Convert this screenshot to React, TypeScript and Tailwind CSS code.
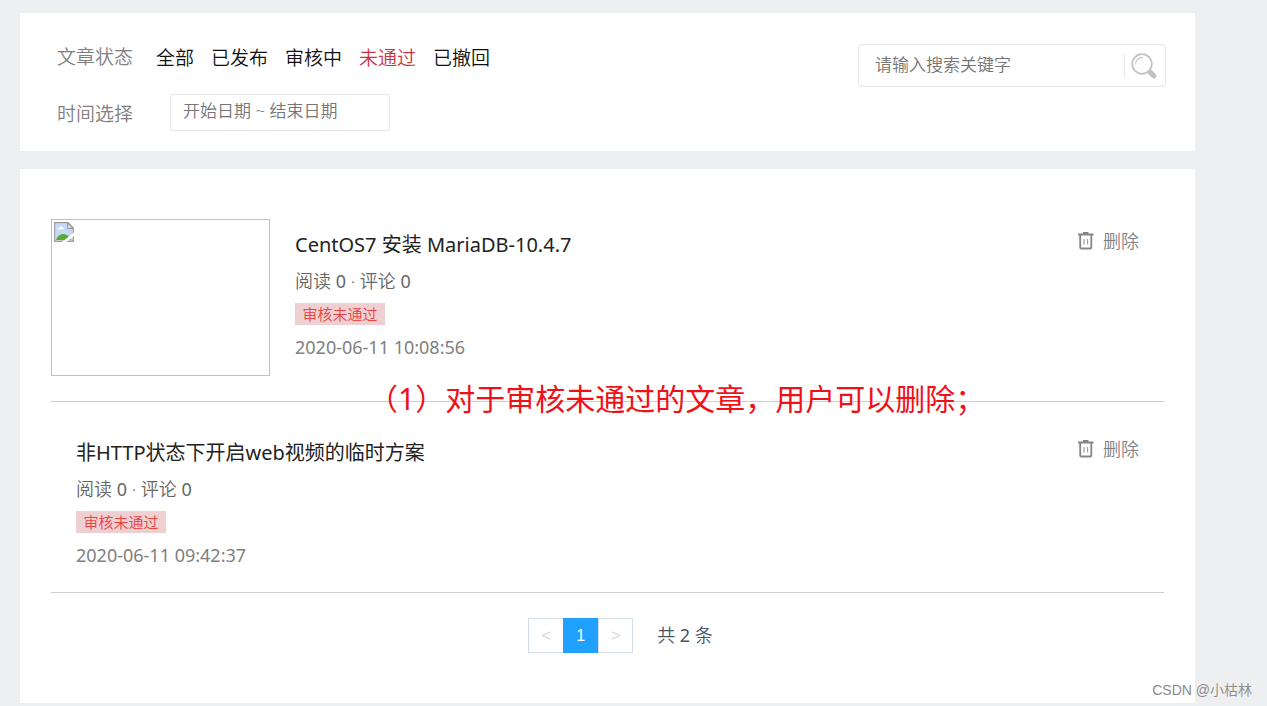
import React, { useCallback, useState } from 'react';

interface Article {
  id: number;
  title: string;
  reads: number;
  comments: number;
  createdAt: string;
  hasCover: boolean;
  note?: string;
}

const STATUSES = ['全部', '已发布', '审核中', '未通过', '已撤回'];

const ARTICLES: Article[] = [
  {
    id: 1,
    title: 'CentOS7 安装 MariaDB-10.4.7',
    reads: 0,
    comments: 0,
    createdAt: '2020-06-11 10:08:56',
    hasCover: true,
    note: '（1）对于审核未通过的文章，用户可以删除；',
  },
  {
    id: 2,
    title: '非HTTP状态下开启web视频的临时方案',
    reads: 0,
    comments: 0,
    createdAt: '2020-06-11 09:42:37',
    hasCover: false,
  },
];

const SearchIcon = () => (
  <svg width="26" height="26" viewBox="0 0 26 26" fill="none" aria-hidden="true">
    <circle cx="11" cy="11" r="9.8" stroke="#c2c2c2" strokeWidth="1.7" />
    <path d="M4.6 11.5A6.8 6.8 0 0 1 12 4.4" stroke="#c8c8c8" strokeWidth="1.1" />
    <path d="M17.5 17.5l1.6 1.6" stroke="#c2c2c2" strokeWidth="2" />
    <path d="M19.3 19.4l3.6 3.5" stroke="#c2c2c2" strokeWidth="5" strokeLinecap="round" />
  </svg>
);

const TrashIcon = () => (
  <svg width="16" height="18" viewBox="0 0 16 18" fill="none" aria-hidden="true">
    <path d="M0 2.5h15.5M5 1h5.5" stroke="#858585" strokeWidth="1.8" />
    <path
      d="M2.2 3v12.2c0 .8.5 1.3 1.3 1.3H12c.8 0 1.3-.5 1.3-1.3V3"
      stroke="#858585"
      strokeWidth="1.8"
    />
    <path d="M6 7v5.5M9.5 7v5.5" stroke="#a6a6a6" strokeWidth="1.3" />
  </svg>
);

const MissingImageIcon = () => (
  <svg width="20" height="20" viewBox="0 0 20 20" aria-hidden="true">
    <path d="M.8.8H14l5.2 5.2v13.2H.8z" fill="#fff" stroke="#9a9a9a" strokeWidth="1.4" />
    <path d="M2 2H13V7h5v11H2z" fill="#c6d8f6" />
    <path d="M13.6 1v5.4H19z" fill="#f4f4f4" stroke="#9a9a9a" strokeWidth="1.1" />
    <path d="M3.5 7.2c0-1.3 1-1.7 1.8-1.5.4-1.6 2.9-1.6 3.2.1 1.1 0 1.5.6 1.5 1.4z" fill="#fff" />
    <path d="M2 18c1-3.8 4-6 7.5-6s5.5 2.2 7.5 6z" fill="#56ab35" />
    <path d="M8 20L20 10.4V14l-7.5 6z" fill="#fff" />
  </svg>
);

interface RowProps {
  article: Article;
  onDelete: (id: number) => void;
}

const ArticleRow = React.memo(({ article, onDelete }: RowProps) => {
  const handleDelete = useCallback(() => {
    onDelete(article.id);
  }, [article.id, onDelete]);

  return (
    <li className="relative flex items-start border-b border-[#cfcfcf] py-[25px]">
      {article.hasCover && (
        <div className="h-[157px] w-[219px] shrink-0 border border-[#c0c0c0] p-0.5">
          <MissingImageIcon />
        </div>
      )}
      <div className="flex-1 pt-2 pl-[25px]">
        <h2 className="text-xl leading-9 font-normal text-[#222]">{article.title}</h2>
        <p className="text-[18px] leading-9 text-[#666]">
          阅读 <span className="font-normal">{article.reads}</span> · 评论{' '}
          <span className="font-normal">{article.comments}</span>
        </p>
        <span className="mt-1 block w-[90px] bg-[#efd0d2] text-center text-[15px] leading-[22px] text-[#e8423f]">
          审核未通过
        </span>
        <time className="mt-[10px] block text-[18px] leading-6 font-normal text-[#808080]">
          {article.createdAt}
        </time>
      </div>
      <button
        type="button"
        onClick={handleDelete}
        className="mt-[10px] mr-[25px] flex items-center gap-[9px] text-[18px] leading-6 text-[#808080]"
      >
        <TrashIcon />
        删除
      </button>
      {article.note && (
        <p className="absolute -bottom-4 left-[317px] text-3xl leading-9 font-normal whitespace-nowrap text-[#ee1118]">
          {article.note}
        </p>
      )}
    </li>
  );
});

export default function App() {
  const [status, setStatus] = useState('未通过');
  const [articles, setArticles] = useState(ARTICLES);

  const handleDelete = useCallback((id: number) => {
    setArticles((list) => list.filter((item) => item.id !== id));
  }, []);

  return (
    <div className="relative min-h-screen bg-[#eeeff1] pt-[13px] pr-[72px] pb-[3px] pl-5 font-['Noto_Sans','Noto_Sans_CJK_SC',sans-serif] font-[350]">
      <section className="flex items-start justify-between bg-white pt-[31px] pr-[29px] pb-5 pl-[37px]">
        <div>
          <div className="flex h-[27px] items-center gap-[23px] text-[19px]">
            <span className="text-[#808080]">文章状态</span>
            <div className="flex gap-[17px] pt-0.5">
              {STATUSES.map((item) => (
                <button
                  key={item}
                  type="button"
                  onClick={() => setStatus(item)}
                  className={item === status ? 'text-[#ca3544]' : 'text-[#111]'}
                >
                  {item}
                </button>
              ))}
            </div>
          </div>
          <div className="mt-[23px] flex items-center gap-[37px]">
            <label htmlFor="range" className="pt-1 text-[19px] text-[#808080]">
              时间选择
            </label>
            <input
              id="range"
              type="text"
              placeholder="开始日期 ~ 结束日期"
              className="h-[37px] w-[220px] rounded-xs border border-[#e6e6e6] px-3 pb-1 text-[17px] placeholder:text-[#757575]"
            />
          </div>
        </div>
        <form className="flex h-[43px] w-[308px] items-center rounded-sm border border-[#e6e6e6]">
          <input
            type="text"
            aria-label="搜索"
            placeholder="请输入搜索关键字"
            className="min-w-0 flex-1 pb-0.5 pl-4 text-[17px] outline-none placeholder:text-[#757575]"
          />
          <button
            type="button"
            aria-label="搜索"
            className="flex h-6 w-[41px] items-center border-l border-[#e6e6e6] pl-[6px]"
          >
            <SearchIcon />
          </button>
        </form>
      </section>

      <section className="mt-[18px] bg-white px-[31px] pt-[25px] pb-[50px]">
        <ul>
          {articles.map((article) => (
            <ArticleRow key={article.id} article={article} onDelete={handleDelete} />
          ))}
        </ul>
        <nav className="mt-[25px] flex items-center justify-center gap-6 pl-[26px] text-[18px] text-[#475669]">
          <div className="flex h-[35px] text-center font-['Liberation_Sans',sans-serif] text-base">
            <button type="button" className="w-[35px] border border-r-0 border-[#d3dce6] text-[#d8d8d8]">
              &lt;
            </button>
            <button type="button" className="w-[35px] bg-[#20a0ff] text-white">
              1
            </button>
            <button type="button" className="w-[35px] border border-[#d3dce6] text-[#d8d8d8]">
              &gt;
            </button>
          </div>
          <span>
            共 <span className="font-normal">{articles.length}</span> 条
          </span>
        </nav>
      </section>

      <span className="absolute right-[15px] bottom-[6px] font-['Liberation_Sans','Noto_Sans_CJK_SC',sans-serif] text-sm text-[#8a8a8a]">
        CSDN @小枯林
      </span>
    </div>
  );
}
